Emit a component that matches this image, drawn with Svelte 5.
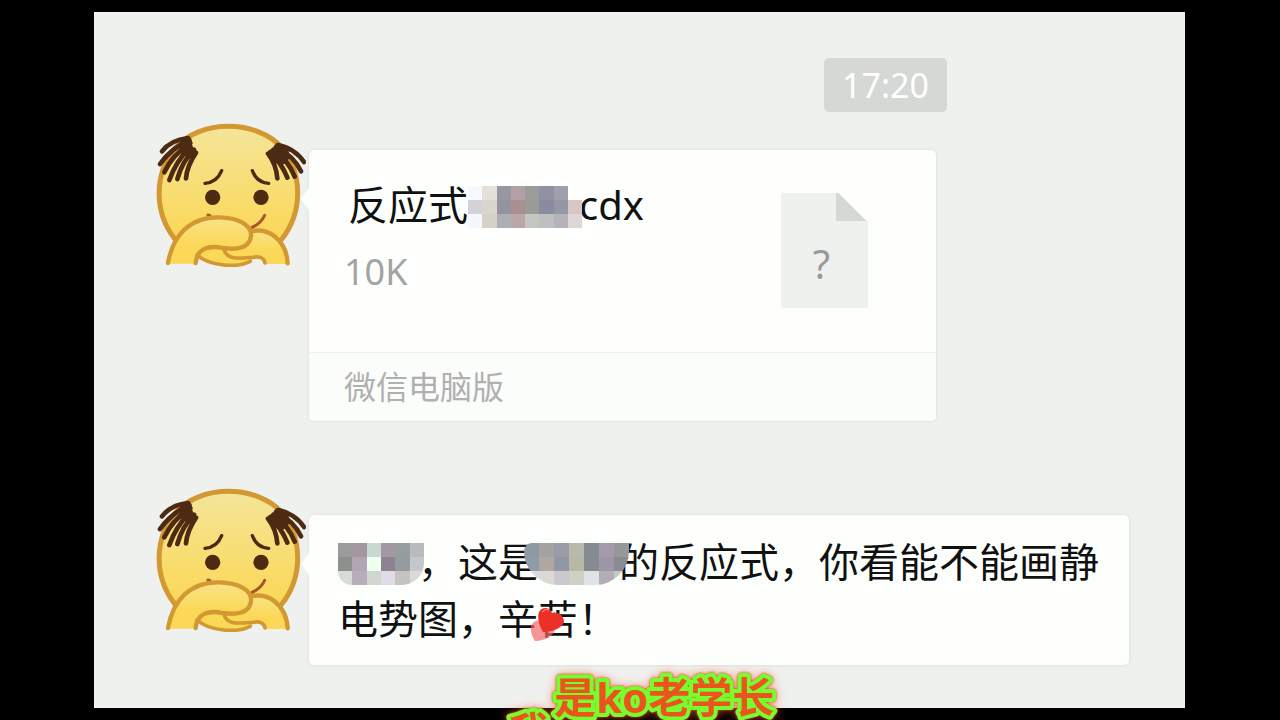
<script>
  const file = { name: "反应式", ext: "cdx", size: "10K", source: "微信电脑版" };

  // Censored names: one colour per block, row by row. "" leaves the block empty.
  const masks = {
    title: [
      ["#f8f9ff", "#e4e1d9", "#9697a0", "#b3a0a6", "#9b9b98", "#9091a2", "#a09fab", ""],
      ["#d3d3d7", "#d9d6d0", "#9292a0", "#a98f91", "#9a9b96", "#888ba2", "#9697a5", "#d8c6c5"],
      ["#f4f7fd", "#d5d1c7", "#aeaeb5", "#baa7a9", "#c4c6c4", "#bec0c0", "#b5b2bb", "#ddd8d5"],
    ],
    sender: [
      ["#9b9b9d", "#a3979f", "#c7dad1", "#a098a3", "#969d9f", "#b8babe"],
      ["#8e918b", "#b3a4b2", "#effff0", "#8e8292", "#959b9e", "#c6c7ca"],
      ["#d8dbd8", "#b8adba", "#d0d6d0", "#e0dce7", "#c4c5c2", "#dadada"],
    ],
    subject: [
      ["#8d99a5", "#a4a3a4", "#9c9ca8", "#b9baab", "#858c91", "#a19baa", "#999899"],
      ["#909ba8", "#b0a8a0", "#9297a8", "#b8b9a4", "#858b91", "#9d96a9", "#8d8a90"],
      ["#dadddd", "#dad9d4", "#cbc9cc", "#d0d1c6", "#dfe2e7", "#b3adb6", "#c9c6c9"],
    ],
  };
</script>

{#snippet mask(name)}
  {@const rows = masks[name]}
  <svg class="mask {name}" viewBox="0 0 {rows[0].length} {rows.length}" preserveAspectRatio="none" shape-rendering="crispEdges" aria-hidden="true">
    {#each rows as row, y}
      {#each row as fill, x}
        {#if fill}<rect {x} {y} width="1" height="1" {fill} />{/if}
      {/each}
    {/each}
  </svg>
{/snippet}

{#snippet avatar(id)}
  <svg class="avatar" viewBox="48 36 450 435" fill="none" stroke-linecap="round" stroke-linejoin="round" role="img" aria-label="avatar">
    <defs>
      <linearGradient id="face-{id}" x1="0" y1="0" x2="0" y2="1">
        <stop offset="0" stop-color="#f4e59a" />
        <stop offset=".7" stop-color="#fada63" />
        <stop offset="1" stop-color="#fbd653" />
      </linearGradient>
      <linearGradient id="hand-{id}" x1="0" y1="0" x2="0" y2="1">
        <stop offset="0" stop-color="#f9e38a" />
        <stop offset=".6" stop-color="#fbd857" />
      </linearGradient>
    </defs>
    <path d="M105 392C38 306 40 187 105 112C178 26 352 22 428 112C492 187 492 306 425 392L390 440H140Z" fill="url(#face-{id})" />
    <path d="M105 388C38 302 45 187 105 115C178 27 352 27 428 115C485 187 492 302 425 388" stroke="#d29831" stroke-width="15" />
    <g stroke="#4c2b12" stroke-width="14">
      <path d="M144 84C108 88 82 103 66 124M148 90C108 108 80 134 60 162M151 99C116 122 89 152 73 187M151 109C125 137 101 171 88 210M162 119C137 144 121 175 112 207M168 128C150 155 140 181 138 205" />
      <path d="M144 84L150 92L151 111L168 128L148 140L130 130L124 112Z" fill="#4c2b12" stroke-width="10" />
      <path d="M414 105C445 110 475 130 492 156M408 111C438 126 468 151 483 184M400 119C430 141 453 171 464 200M391 126C414 149 432 178 442 203M384 131C402 154 410 180 412 205" />
      <path d="M412 104L404 120L384 131L402 154L430 158L444 142L440 118Z" fill="#4c2b12" stroke-width="10" />
      <path d="M245 182C236 205 219 218 195 220M337 182C346 207 362 219 386 220" stroke-width="10" />
    </g>
    <g fill="#4c2b12">
      <circle cx="218" cy="262" r="23" />
      <circle cx="363" cy="262" r="23" />
    </g>
    <path d="M374 316Q362 341 336 352M204 315L210 317" stroke="#a8552b" stroke-width="9" />
    <path d="M318 365C380 345 440 392 443 462H375C374 444 358 440 342 444Q302 476 230 462L175 445Z" fill="url(#hand-{id})" />
    <path d="M325 367C383 346 439 390 443 460" stroke="#d29831" stroke-width="13" />
    <path d="M84 461C96 377 151 321 238 322C289 323 337 342 333 379C329 416 287 420 248 414C205 405 174 413 168 461Z" fill="url(#hand-{id})" />
    <path d="M84 459C99 373 153 320 238 322C289 323 337 342 333 379C329 416 287 420 248 414C205 405 171 415 167 459" stroke="#d29831" stroke-width="13" />
    <path d="M171 435C204 465 285 477 331 454M251 417C262 454 303 443 339 442C360 438 373 445 375 459" stroke="#d29831" stroke-width="11" />
  </svg>
{/snippet}

<main>
  <section class="chat">
    <div class="stamp"><time datetime="17:20">17:20</time></div>

    <article class="message">
      {@render avatar("file")}
      <div class="bubble card">
        <div class="file">
          <div class="info">
            <div class="name">{file.name}{@render mask("title")}{file.ext}</div>
            <div class="size">{file.size}</div>
          </div>
          <div class="doc">?</div>
        </div>
        <footer>{file.source}</footer>
      </div>
    </article>

    <article class="message">
      {@render avatar("text")}
      <p class="bubble text">
        {@render mask("sender")}，这是{@render mask("subject")}的反应式，你看能不能画静电势图，辛<span class="liked">苦<svg class="hearts" viewBox="0 0 34 36" aria-hidden="true">
            <path d="M5 34C1 28-1 20 3 16C7 12 12 13 14 16C19 13 25 17 25 22C24 29 15 34 5 34Z" fill="#ef6a68" opacity=".7" />
            <path d="M13 25C9 19 7 10 9 5C12-1 20 0 22 6C28 4 34 9 34 15C32 21 23 25 13 25Z" fill="#eb3028" />
            <path d="M12 5Q15 1 19 3" fill="none" stroke="#ff9b94" />
          </svg></span>！
      </p>
    </article>
  </section>

  <svg class="caption" viewBox="0 0 290 60">
    <text class="small" x="20" y="86" transform="rotate(-6 40 70)">我</text>
    <text x="64" y="53">是ko老学长</text>
  </svg>
</main>

<style>
  :global(body) {
    margin: 0;
    background: #000;
  }
  main {
    position: relative;
    box-sizing: border-box;
    display: flex;
    min-height: 100vh;
    padding: 12px 95px 12px 94px;
    overflow: hidden;
    font-family: "Noto Sans", "Noto Sans CJK SC", sans-serif;
  }
  .chat {
    flex: 1;
    padding: 46px 56px 0 62px;
    background: #eff1ef;
  }
  .stamp {
    display: flex;
    justify-content: flex-end;
    padding-right: 182px;
  }
  time {
    padding: 0 18px;
    border-radius: 5px;
    background: #d6d8d6;
    color: #fff;
    font-size: 34px;
    line-height: 54px;
  }
  .message {
    display: flex;
    align-items: flex-start;
    gap: 3px;
    margin-top: 10px;
  }
  .message + .message {
    margin-top: 66px;
  }
  .avatar {
    flex: none;
    width: 150px;
    height: 145px;
  }
  .bubble {
    position: relative;
    margin: 28px 0 0;
    border-radius: 5px;
    background: #fdfffd;
    box-shadow: 0 0 3px 1px #e2e4e2;
    color: #111;
    font-size: 40px;
  }
  .bubble::before {
    content: "";
    position: absolute;
    top: 38px;
    left: -8px;
    border: solid transparent;
    border-width: 11px 8px 11px 0;
    border-right-color: #fdfffd;
  }
  .card {
    flex: 0 1 627px;
  }
  .file {
    display: flex;
    justify-content: space-between;
    padding: 27px 68px 44px 39px;
  }
  .name {
    line-height: 56px;
    white-space: nowrap;
  }
  .size {
    margin: 11px 0 0 -4px;
    color: #a3a3a3;
    font-size: 36px;
    line-height: 56px;
  }
  .doc {
    box-sizing: border-box;
    width: 87px;
    height: 115px;
    margin-top: 16px;
    padding: 42px 6px 0 0;
    background:
      linear-gradient(45deg, #d6d8d6 50%, #fdfffd 51%) top right / 32px 28px no-repeat,
      #eff1ef;
    border-radius: 3px;
    color: #999;
    font-size: 40px;
    line-height: 58px;
    text-align: center;
  }
  footer {
    padding: 0 35px;
    border-top: 1px solid #f0f2f0;
    border-radius: 0 0 5px 5px;
    background: #fbfdfb;
    color: #b0b0b0;
    font-size: 32px;
    line-height: 68px;
  }
  .text {
    padding: 18px 26px 18px 29px;
    line-height: 57px;
  }
  .mask {
    position: relative;
    height: 42px;
    margin-bottom: 4px;
    vertical-align: middle;
  }
  .title {
    width: 114px;
    margin-right: -3px;
  }
  .sender {
    width: 86px;
    margin-right: -6px;
    border-radius: 0 0 22px 14px;
  }
  .subject {
    width: 105px;
    margin-right: -10px;
    margin-left: -14px;
    border-radius: 12px 0 50px 50px;
  }
  .liked {
    position: relative;
  }
  .hearts {
    position: absolute;
    top: 16px;
    left: -8px;
    width: 34px;
    height: 36px;
  }
  .caption {
    position: absolute;
    bottom: 0;
    left: 50%;
    width: 290px;
    height: 60px;
    margin-left: -150px;
    fill: #eb541d;
    stroke: #78fb2f;
    stroke-width: 8px;
    stroke-linejoin: round;
    paint-order: stroke;
    font-size: 42px;
    font-weight: 700;
    filter: drop-shadow(0 0 1px #d43a10) drop-shadow(0 0 5px #ff5a3099);
  }
  .small {
    font-size: 40px;
  }
</style>
